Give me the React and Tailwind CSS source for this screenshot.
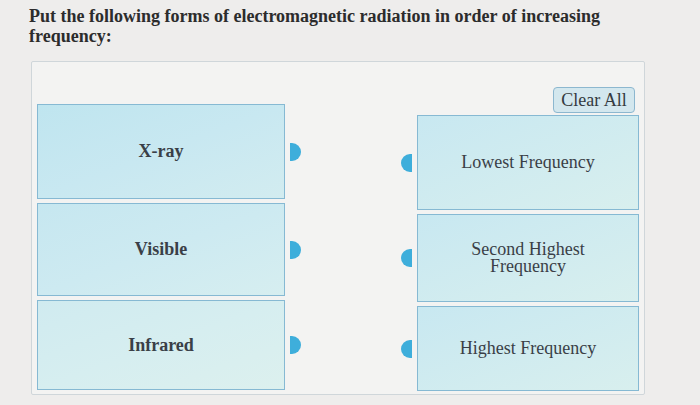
import React from "react";

const serif = { fontFamily: '"Liberation Serif", "Times New Roman", serif' };

function LeftItem({ label, h, tone }) {
  return (
    <div className="relative" style={{ height: h }}>
      <div className={`flex h-full w-[248px] items-center justify-center border border-[#86b9d3] bg-gradient-to-br ${tone}`}>
        <span className="text-[18px] font-bold text-[#3a3f47]">{label}</span>
      </div>
      {/* drag handle on the right edge */}
      <div className="absolute left-[253px] top-1/2 h-[18px] w-[11px] -translate-y-1/2 rounded-r-full bg-[#3eaedb]" />
    </div>
  );
}

function RightItem({ label, h }) {
  return (
    <div className="relative" style={{ height: h }}>
      <div className="flex h-full w-[222px] items-center justify-center border border-[#86b9d3] bg-gradient-to-br from-[#c8e8f1] to-[#d8efee] px-10 text-center">
        <span className="text-[18px] leading-[17px] text-[#3a3f47]">{label}</span>
      </div>
      {/* drop handle on the left edge */}
      <div className="absolute -left-[16px] top-1/2 h-[18px] w-[11px] -translate-y-1/2 rounded-l-full bg-[#3eaedb]" />
    </div>
  );
}

export default function App() {
  return (
    <div className="h-[405px] w-[700px] overflow-hidden bg-[#eeedec]" style={serif}>
      <div className="px-[29px] pt-[6px]">
        <p className="text-[18px] font-bold leading-[20px] text-[#2c2c2c]">
          Put the following forms of electromagnetic radiation in order of increasing
          <br />
          frequency:
        </p>
      </div>
      <div className="ml-[31px] mt-[15px] h-[334px] w-[614px] rounded-[2px] border border-[#cfd6da] bg-[#f3f3f2]">
        <div className="flex">
          <div className="ml-[5px] mt-[42px] flex flex-col gap-[4px]">
            <LeftItem label="X-ray" h={95} tone="from-[#bfe5ef] via-[#c8e8f1] to-[#d2ecf0]" />
            <LeftItem label="Visible" h={93} tone="from-[#c6e7f0] via-[#cdeaf1] to-[#d6eef0]" />
            <LeftItem label="Infrared" h={90} tone="from-[#d0ebf0] via-[#d6eef0] to-[#dcf0ee]" />
          </div>
          <div className="ml-[132px] flex flex-col items-end pt-[25px]">
            <button className="mb-[2px] mr-[4px] h-[26px] w-[82px] rounded-[4px] border border-[#8cb7cf] bg-[#d3e7ee] text-[18px] leading-none text-[#333a40]">
              Clear All
            </button>
            <div className="flex flex-col gap-[4px]">
              <RightItem label="Lowest Frequency" h={95} />
              <RightItem label="Second Highest Frequency" h={88} />
              <RightItem label="Highest Frequency" h={85} />
            </div>
          </div>
        </div>
      </div>
    </div>
  );
}
